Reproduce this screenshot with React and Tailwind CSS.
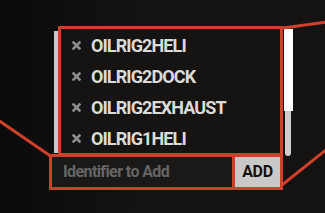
import React from 'react';

const items = ['OILRIG2HELI', 'OILRIG2DOCK', 'OILRIG2EXHAUST', 'OILRIG1HELI'];

const Cross = () => (
  <svg width="9" height="9" viewBox="0 0 9 9" className="shrink-0">
    <path d="M1.5 1.5 L7.5 7.5 M7.5 1.5 L1.5 7.5" stroke="#8e8d8b" strokeWidth="2.6" strokeLinecap="square" />
  </svg>
);

export default function App() {
  return (
    <div
      className="relative w-[325px] h-[213px] overflow-hidden bg-gradient-to-r from-[#0b0b0b] via-[#151412] to-[#141311]"
      style={{ fontFamily: 'Roboto, "Liberation Sans", sans-serif' }}
    >
      <div className="pt-[26px] pl-[49px] flex flex-col">
        {/* list + strip + scrollbar */}
        <div className="flex pl-[5px]">
          <div className="w-[4px] mt-[5px] h-[122px] bg-[#c9c8c6]" />
          <div className="w-[225px] h-[130px] border-[3px] border-[#cf3f2a] bg-[#151412] pt-[1px]">
            {items.map((item) => (
              <div key={item} className="flex items-center h-[31px] pl-[11px] gap-[10px]">
                <Cross />
                <span className="text-[18px] leading-[31px] font-bold tracking-[-0.9px] text-[#dcdbd8]">{item}</span>
              </div>
            ))}
          </div>
          <div className="flex flex-col items-start mt-[3px] ml-[1px] h-[127px]">
            <div className="w-[9px] h-[82px] bg-white" />
            <div className="w-[6px] flex-1 ml-[1px] bg-[#cfcecc] rounded-b-[3px]" />
          </div>
        </div>

        {/* input row */}
        <div className="flex w-[234px] h-[36px] -mt-[2px] border-[3px] border-[#cf3f2a]">
          <div className="w-[180px] flex items-center pl-[11px] bg-[#1a1918]">
            <span className="text-[16px] font-bold tracking-[-0.6px] text-[#666563]">Identifier to Add</span>
          </div>
          <div className="w-[3px] bg-[#cf3f2a]" />
          <button className="flex-1 flex items-center justify-center bg-[#cac9c7] text-[16px] font-bold tracking-[-0.3px] text-[#111]">
            ADD
          </button>
        </div>
      </div>

      <svg className="absolute inset-0 pointer-events-none" width="325" height="213">
        <line x1="-2" y1="120" x2="52" y2="157" stroke="#cf3f2a" strokeWidth="3" />
        <line x1="283" y1="28" x2="327" y2="22" stroke="#cf3f2a" strokeWidth="3" />
        <line x1="282" y1="185" x2="327" y2="149" stroke="#cf3f2a" strokeWidth="3" />
      </svg>
    </div>
  );
}
